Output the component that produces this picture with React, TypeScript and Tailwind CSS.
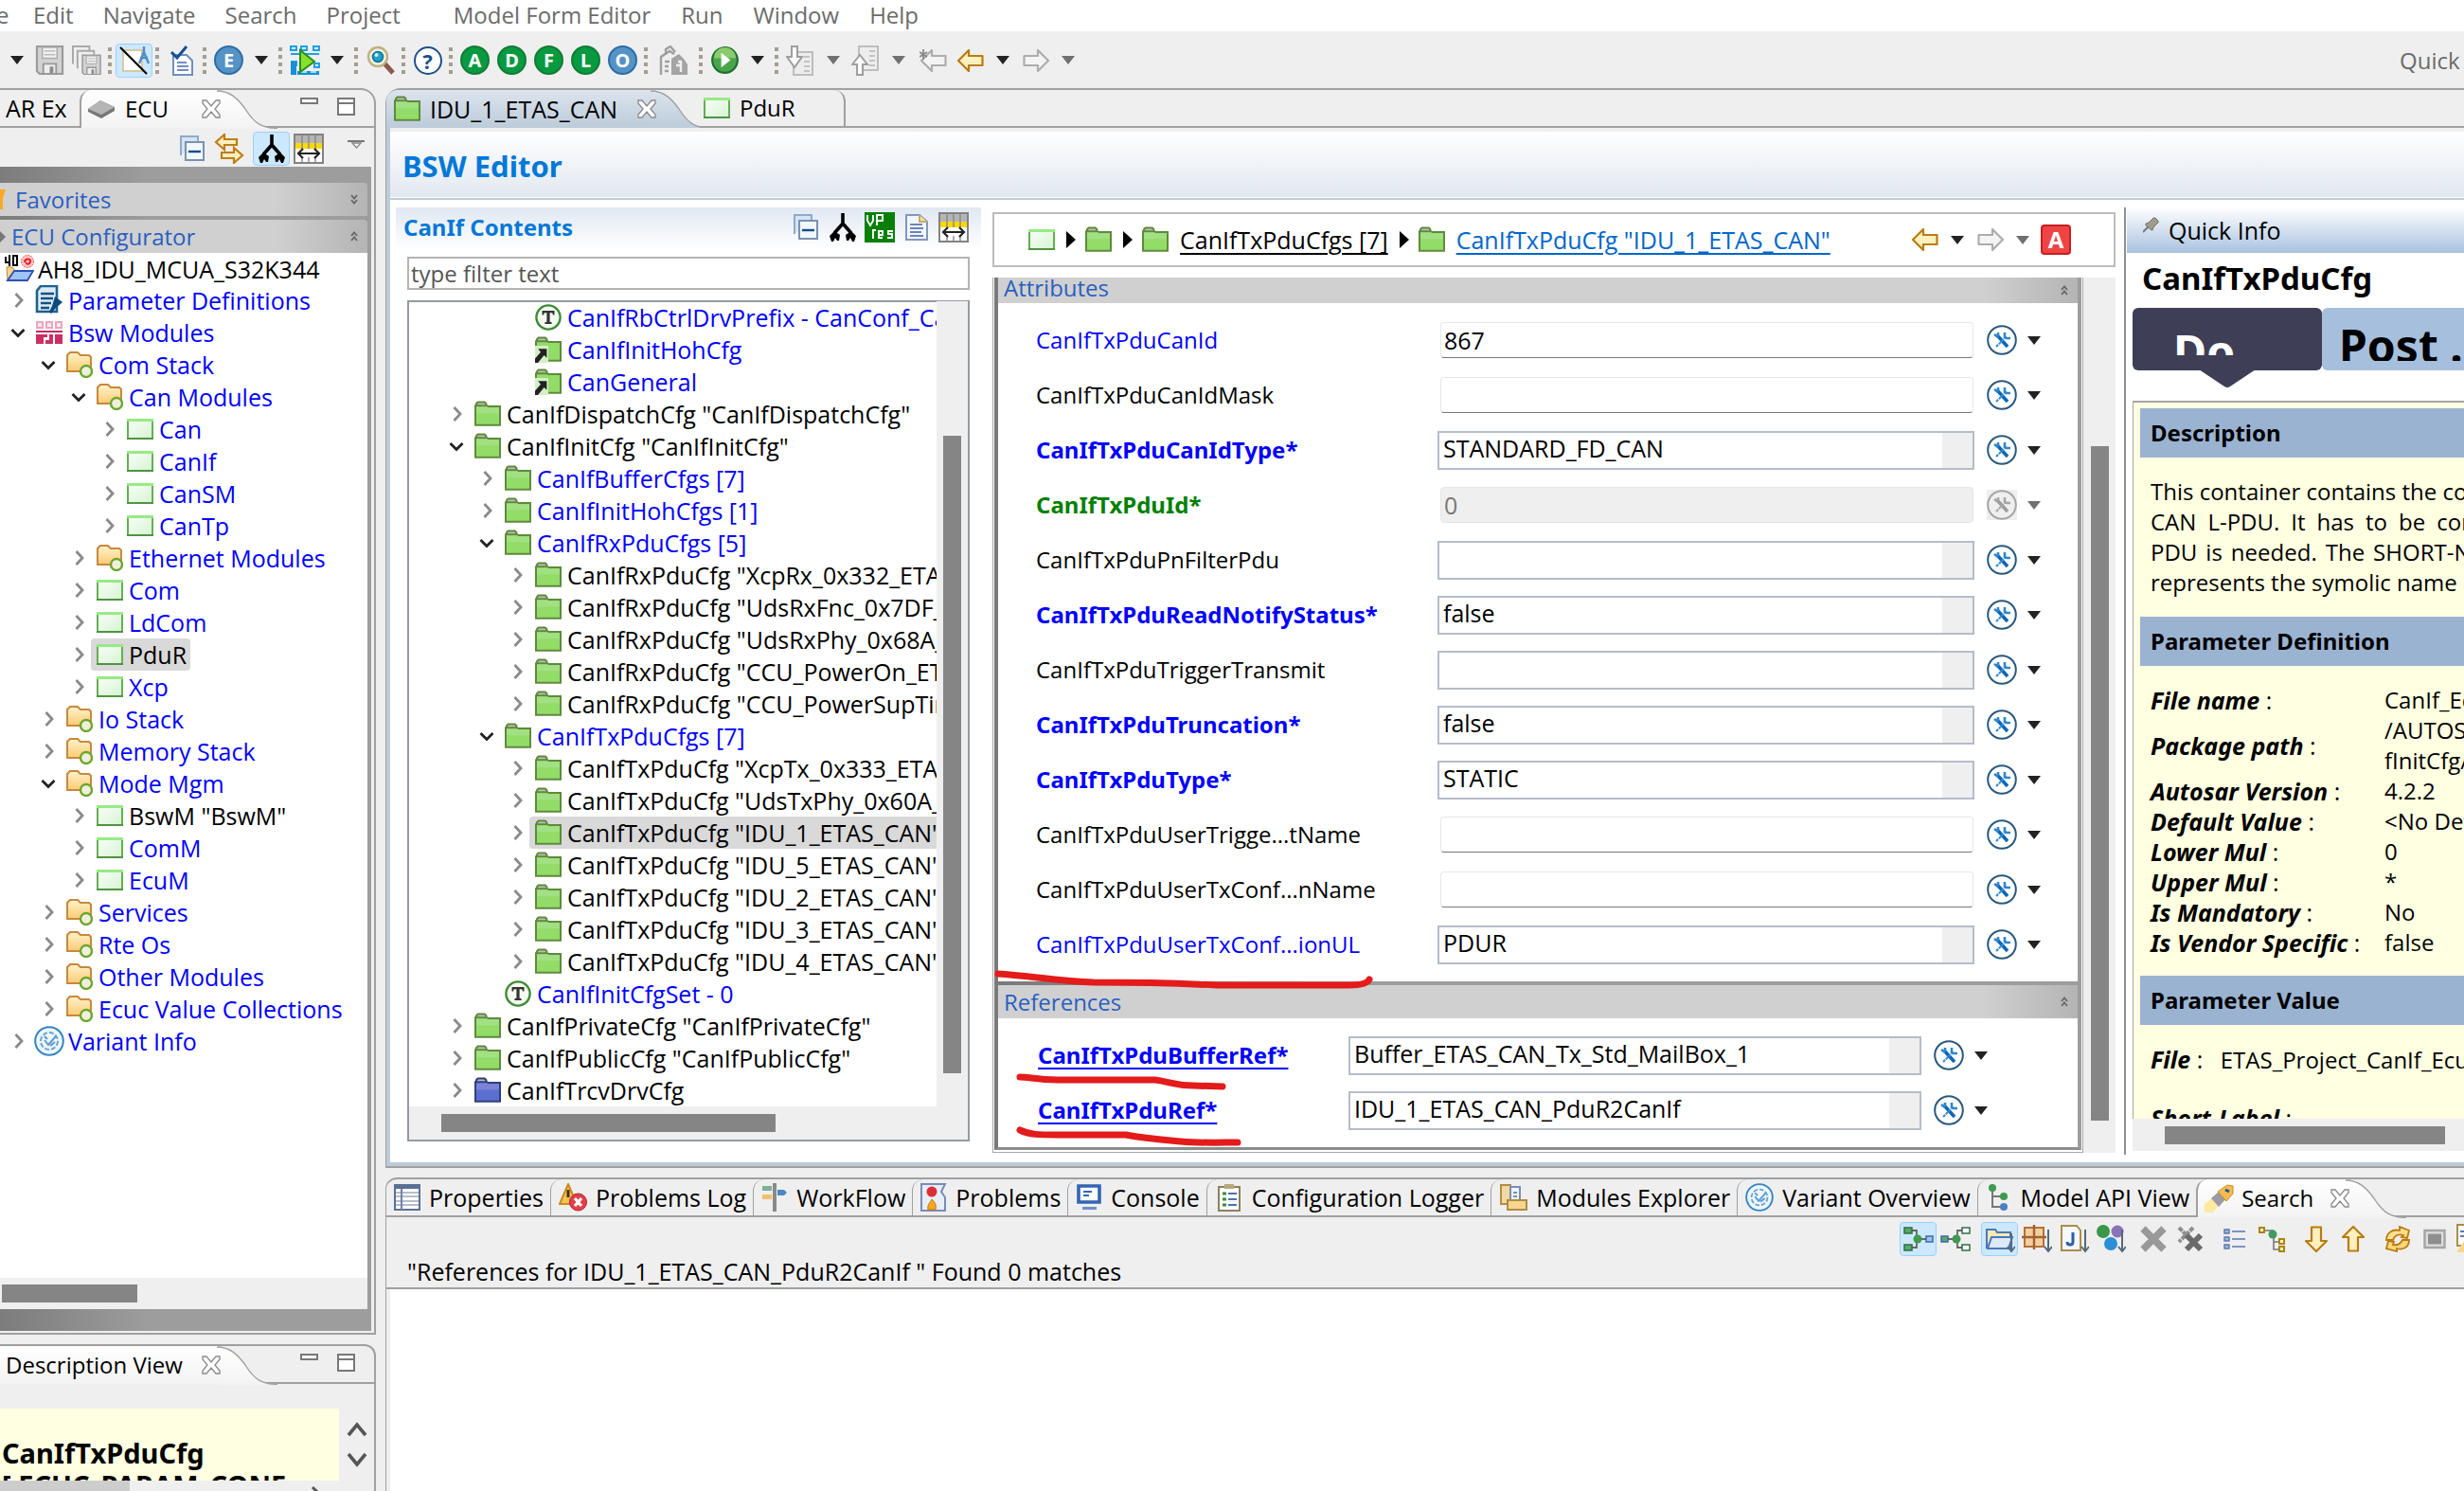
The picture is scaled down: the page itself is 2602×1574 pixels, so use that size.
import React from "react";

type P = { className?: string };

const Svg = ({ children, className = "size-8", vb = "0 0 16 16" }: { children: React.ReactNode; className?: string; vb?: string }) => (
  <svg viewBox={vb} className={`shrink-0 ${className}`} fill="none" aria-hidden="true">{children}</svg>
);

/* ---------- icons ---------- */
const Folder = ({ className = "size-7", blue = false }: P & { blue?: boolean }) => (
  <Svg className={className} vb="0 0 14 14">
    <path d="M1 2.8V1.6L1.8.8h3.6l.8.8v1.2" fill="#bdbdbd" stroke={blue ? "#2f3f7c" : "#5f8a3c"} />
    <path d="M.5 2.6h6l.5.4h6.5v9.9H.5z" fill={blue ? "#5a70d0" : "#93dc68"} stroke={blue ? "#2f3f7c" : "#5f8a3c"} />
    <path d="M1 3.2h5.8l.5.4H13v3H1z" fill={blue ? "#7c83d6" : "#a2e084"} />
  </Svg>
);
const RefFolder = () => (
  <Svg className="size-7" vb="0 0 14 14">
    <path d="M1 2.8V1.6L1.8.8h3.6l.8.8v1.2" fill="#bdbdbd" stroke="#5f8a3c" />
    <path d="M.5 2.6h6l.5.4h6.5v9.9H.5z" fill="#93dc68" stroke="#5f8a3c" />
    <path d="M0 5h7v9H0z" fill="#d3efc4" />
    <path d="M1.6 6.6h4.6v4.8L4.8 10 1.5 14H0v-2.2L3 8.4z" fill="#222" />
  </Svg>
);
const ModuleBox = () => (
  <Svg className="h-[22px] w-7" vb="0 0 28 22">
    <defs><linearGradient id="mb" x1="0" y1="0" x2="1" y2="1"><stop offset="0" stopColor="#fafffa" /><stop offset="1" stopColor="#d6f3d2" /></linearGradient></defs>
    <path d="M1 1h26v20H1z" fill="url(#mb)" stroke="#63b052" strokeWidth="2" />
    <path d="M0 0h28v3H0z" fill="#97ea84" />
    <path d="M0 20h28v2H0z" fill="#4f9442" />
  </Svg>
);
const TreeFolder = () => (
  <Svg className="h-7 w-7" vb="0 0 28 28">
    <defs><linearGradient id="tf" x1="0" y1="0" x2="0" y2="1"><stop offset="0" stopColor="#fff3cc" /><stop offset="1" stopColor="#fbcb74" /></linearGradient></defs>
    <path d="M1 21V4l3-3h8l3 3h9l2 2v15z" fill="url(#tf)" stroke="#c8883c" strokeWidth="2" />
    <circle cx="21" cy="21" r="6" fill="#eef0dc" stroke="#6ea62c" strokeWidth="2.4" />
  </Svg>
);
const TypeT = () => (
  <Svg className="size-7" vb="0 0 28 28">
    <circle cx="14" cy="14" r="12.6" fill="#f4fbf0" stroke="#3f8a35" strokeWidth="2.4" />
    <path d="M7.5 7h13v4.5H19l-.8-2.2h-2.6v9.4l2 .6V21h-7.2v-1.7l2-.6V9.3H9.800L9 11.500H7.500z" fill="#333" />
  </Svg>
);
const VariantCircle = ({ className = "size-8" }: P) => (
  <Svg className={className} vb="0 0 32 32">
    <circle cx="16" cy="16" r="14.800" stroke="#3485c4" strokeWidth="2" fill="#eef6fc" />
    <circle cx="16" cy="16" r="9" stroke="#6aa5d3" strokeWidth="2" strokeDasharray="5 2" />
    <path d="M11 15l4 5 8-9M11 11l3 3M17 21l5-4" stroke="#5a9bd0" strokeWidth="2" />
  </Svg>
);
const ParamDefs = () => (
  <Svg className="size-8" vb="0 0 32 32">
    <path d="M7 1h17v27H3V6z" fill="#dcebf5" stroke="#1f618e" strokeWidth="2.600" />
    <path d="M7 9h14M7 14h13M7 19h11M7 24h9" stroke="#15517d" strokeWidth="2.400" />
    <path d="M22 12l8 6-7 6-5 6-2-2 3-6z" fill="#0c4a80" />
  </Svg>
);
const BswIcon = () => (
  <Svg className="h-6 w-7" vb="0 0 28 24">
    <path d="M1 1h6v6H1zM11 1h6v6h-6zM21 1h6v6h-6z" stroke="#e9a6bd" strokeWidth="2" fill="#fbeaf0" />
    <path d="M0 10h28v2H0z" fill="#c8285a" />
    <path d="M0 14h12v3H8v7H0zM14 14h4v10h-8v-4h4zM20 14h8v10h-8z" fill="#cc2f63" />
  </Svg>
);
const ProjectIcon = () => (
  <Svg className="size-8" vb="0 0 32 32">
    <path d="M3 14h6l3 4-8 10z" fill="#f7d68c" stroke="#b98a3a" />
    <path d="M4 28l7-10h20l-6 10z" fill="#9dc4f5" stroke="#2f50b0" strokeWidth="1.800" />
    <path d="M2 3v6h5M6 1v12M10 2h4v10h-4z" stroke="#000" strokeWidth="2" />
    <circle cx="25" cy="8" r="6.500" fill="#fbc3c3" stroke="#ef5a5a" strokeDasharray="2 1" />
    <path d="M22 9c0-5 7-4 6-1-1 4-5 3-4 1" stroke="#e02020" strokeWidth="2" />
  </Svg>
);
const Wrench = ({ off = false }: { off?: boolean }) => (
  <Svg className={off ? "size-8 bg-[#efefef]" : "size-8"} vb="0 0 32 32">
    <circle cx="16" cy="16" r="14.800" stroke={off ? "#a5a5a5" : "#2a587c"} strokeWidth="2" />
    <path d="M11 11l11 12" stroke={off ? "#9c9c9c" : "#0d66b5"} strokeWidth="3.600" />
    <path d="M10 23L20 13" stroke={off ? "#a5a5a5" : "#3b8fd2"} strokeWidth="2.200" strokeDasharray="3 1" />
    <path d="M19 8v5l2 1h4M8 10l4 3M12 8v4" stroke={off ? "#a5a5a5" : "#2f86cc"} strokeWidth="2.600" />
  </Svg>
);
const CollapseAll = () => (
  <Svg className="h-7 w-[26px]" vb="0 0 26 28">
    <path d="M1 21V1h18v5" stroke="#8fa9c9" strokeWidth="2" fill="#d5e5f5" />
    <path d="M6 7h19v19H6z" fill="#f1f7fd" stroke="#7b90b3" strokeWidth="2" />
    <path d="M9 17h13" stroke="#0c4f8c" strokeWidth="2.400" />
  </Svg>
);
const Branch = () => (
  <Svg className="h-8 w-7" vb="0 0 28 32">
    <path d="M14 1v11l-8 9v6M14 12l8 9v6" stroke="#000" strokeWidth="3.600" />
    <path d="M0 25l5-5 6 4-1 6H8l-2-3-2 4H2zM28 25l-5-5-6 4 1 6h2l2-3 2 4h2z" fill="#000" />
  </Svg>
);
const Columns = () => (
  <Svg className="size-8" vb="0 0 32 32">
    <path d="M1 1h30v30H1z" fill="#fff" stroke="#828282" strokeWidth="2" />
    <path d="M2 2h28v8H2z" fill="#b5b5b5" />
    <path d="M2 10h28v6H2z" fill="#ffd800" />
    <path d="M9 2v14M16 2v14M23 2v14M9 25v5M16 25v5M23 25v5" stroke="#888" strokeWidth="1.400" />
    <path d="M5 21h22M10 16l-5 5 5 5M22 16l5 5-5 5" stroke="#222" strokeWidth="2.200" />
  </Svg>
);
const VpRes = () => (
  <Svg className="size-8" vb="0 0 32 32">
    <path d="M0 0h32v32H0z" fill="#088008" />
    <path d="M3 3v6l3 5 3-5V3M13 14V3h6v6h-6M9 28v-9h3M14 24h5v-4h-4v7h4M30 20h-5v3h4v4h-5" stroke="#fff" strokeWidth="1.900" />
  </Svg>
);
const Page = () => (
  <Svg className="h-7 w-6" vb="0 0 24 28">
    <path d="M1 1h14l8 7v19H1z" fill="#f2f6fc" stroke="#8197bd" strokeWidth="2" />
    <path d="M15 1v7h8" fill="#f4dfa5" stroke="#c9ac62" strokeWidth="2" />
    <path d="M5 11h13M5 15h14M5 19h12M5 23h14" stroke="#6a84b8" strokeWidth="2" />
  </Svg>
);
const SwapArrows = () => (
  <Svg className="size-8" vb="0 0 32 32">
    <path d="M11 1v5h13v6H11v5L2 9z" fill="#fdeebf" stroke="#bd7e14" strokeWidth="2.200" />
    <path d="M21 15v5H8v6h13v5l9-8z" fill="#fdeebf" stroke="#bd7e14" strokeWidth="2.200" />
  </Svg>
);
const Arrow = ({ dir = "l", off = false, star = false }: { dir?: "l" | "r" | "u" | "d"; off?: boolean; star?: boolean }) => {
  const rot = { l: "", r: "rotate-180", u: "rotate-90", d: "-rotate-90" }[dir];
  return (
    <Svg className={`h-6 w-[30px] ${rot}`} vb="0 0 30 24">
      <path d="M13 1v6h14.500v10H13v6L2 12z" fill={off ? "#f4f4f4" : "#fff0bd"} stroke={off ? "#adadad" : "#ba7b10"} strokeWidth="2.200" strokeLinejoin="round" />
      {star && <path d="M4 0v11M0 3l8 5M8 3L0 8" stroke="#8a8a8a" strokeWidth="1.800" />}
    </Svg>
  );
};
const Tri = ({ off = false }: { off?: boolean }) => (
  <Svg className="h-[9px] w-[14px]" vb="0 0 14 9"><path d="M0 0h14L7 9z" fill={off ? "#707070" : "#222"} /></Svg>
);
const TriRight = () => (
  <Svg className="-mr-[2px] h-[18px] w-[10px]" vb="0 0 10 18"><path d="M0 0l10 9-10 9z" fill="#000" /></Svg>
);
const CloseX = () => (
  <Svg className="size-5" vb="0 0 20 20">
    <path d="M1 1h4l5 6 5-6h4v3l-5 6 5 6v3h-4l-5-6-5 6H1v-3l5-6-5-6z" fill="#fff" stroke="#8a8a8a" strokeWidth="1.300" />
  </Svg>
);
const Circ = ({ ch, blue = false }: { ch: string; blue?: boolean }) => (
  <span className={`grid size-[31px] place-items-center rounded-full border-2 font-['Noto_Sans',sans-serif] text-[20px] leading-none font-bold text-white ${blue ? "border-[#2d6ca6] bg-[#5592c6]" : "border-[#0f7c35] bg-[#079a40]"}`}>{ch}</span>
);
const MinMax = () => (
  <div className="flex gap-5">
    <button aria-label="Minimize" className="h-[7px] w-[19px] border-2 border-[#777] bg-white" />
    <button aria-label="Maximize" className="flex h-[19px] w-[19px] items-start border-2 border-[#777] bg-white"><span className="h-[5px] flex-1 border-b-2 border-[#777]" /></button>
  </div>
);
const Save = ({ many = false }: { many?: boolean }) => (
  <Svg className="size-[31px]" vb="0 0 32 32">
    {many && <path d="M1 20V1h18v4M6 25V6h18v4" stroke="#a9a9a9" strokeWidth="2" />}
    <g transform={many ? "translate(10 10) scale(.7)" : ""}>
      <path d="M2 1h28v30H5l-3-3z" fill="#d2d2d2" stroke="#9b9b9b" strokeWidth="2.200" />
      <path d="M8 2h16v12H8z" fill="#f1f1f1" stroke="#aaa" strokeWidth="1.500" />
      <path d="M10 6h12M10 10h12" stroke="#bbb" strokeWidth="1.500" />
      <path d="M9 20h14v11H9z" fill="#eee" stroke="#999" strokeWidth="2" />
      <path d="M16 23h4v7h-4z" fill="#8c8c8c" />
    </g>
  </Svg>
);
const MarkOff = () => (
  <Svg vb="0 0 32 32">
    <path d="M4 5h20v22H4z" fill="#fff" stroke="#d9c9a3" strokeWidth="2" />
    <path d="M26 1v6l-5 12M26 7l5 12M22 13h8" stroke="#4e8cc9" strokeWidth="2.400" />
    <path d="M1 2l28 28" stroke="#000" strokeWidth="2.200" />
  </Svg>
);
const CheckList = () => (
  <Svg vb="0 0 32 32">
    <path d="M7 10h14l6 6v15H7z" fill="#fff" stroke="#6f8fbf" strokeWidth="2" />
    <path d="M11 18h10M11 22h12M11 26h12" stroke="#6f8fbf" strokeWidth="2" />
    <path d="M5 7l6 6L21 1" stroke="#174f94" strokeWidth="3" />
  </Svg>
);
const RunGrid = () => (
  <Svg vb="0 0 32 32">
    <path d="M1 1h6v4H1zM12 1h6v4h-6zM25 1h6v4h-6zM1 9h30M1 17h6v5M26 19h5v4h-5z" stroke="#1ba1e6" strokeWidth="2" />
    <path d="M1 17h6v14H1zM8 27h23v4H8z" fill="#1590dc" /><path d="M12 28h6M22 28h6" stroke="#9fe0ff" strokeWidth="2" />
    <path d="M11 5l15 12-15 11z" fill="#86e22c" stroke="#2c8f1e" strokeWidth="2" />
  </Svg>
);
const Magnifier = () => (
  <Svg vb="0 0 32 32">
    <path d="M20 19l9 10" stroke="#8b5a4c" strokeWidth="5" />
    <circle cx="13" cy="12" r="10" fill="#f4f1e2" stroke="#bfb083" strokeWidth="2.400" />
    <circle cx="13" cy="12" r="5.500" fill="#1fa3c9" stroke="#0b6f95" strokeWidth="1.500" />
    <circle cx="11.500" cy="10" r="2" fill="#d7f4ff" />
  </Svg>
);
const Bags = () => (
  <Svg vb="0 0 32 32">
    <path d="M2 31V12l9-6 5 3M7 10V4l5-3 5 6" stroke="#9f9f9f" strokeWidth="2.400" />
    <path d="M13 14l8-5 5 5 4 6v11H13z" fill="#a4a4a4" />
    <path d="M20 17h3v11M18 21h6" stroke="#efefef" strokeWidth="2.400" />
    <path d="M6 17h5M6 22h4M6 27h4" stroke="#9f9f9f" strokeWidth="2.400" />
  </Svg>
);
const Play = () => (
  <Svg className="size-[29px]" vb="0 0 30 30"><circle cx="15" cy="15" r="13.800" fill="#4aa54a" stroke="#1d6e30" strokeWidth="2.200" /><path d="M3 13a12 12 0 0124 0z" fill="#8acb6c" /><path d="M11 7l10 8-10 8z" fill="#fff" /></Svg>
);
const DocArrow = ({ up = false }: { up?: boolean }) => (
  <Svg vb="0 0 32 32">
    <path d={up ? "M8 1h20v25H8z" : "M8 7h20v24H8z"} fill="#ededed" stroke="#bdbdbd" strokeWidth="2" />
    <path d={up ? "M19 6h6M19 11h6M19 16h6M19 21h6" : "M19 12h6M19 17h6M19 22h6M19 27h6"} stroke="#c2c2c2" strokeWidth="2" />
    <path d={up ? "M6 31V20H1l8-10 8 10h-5v11z" : "M6 1v11H1l8 11 8-11h-5V1z"} fill="#fafafa" stroke="#9e9e9e" strokeWidth="2" />
  </Svg>
);
const DoubleChev = ({ down = false }: { down?: boolean }) => (
  <Svg className={`h-[11px] w-2 ${down ? "rotate-180" : ""}`} vb="0 0 8 11"><path d="M1 5l3-3.500L7 5M1 10l3-3.500L7 10" stroke="#666" strokeWidth="1.800" /></Svg>
);
const Chev = ({ open }: { open?: boolean }) =>
  open ? (
    <Svg className="h-4 w-4" vb="0 0 16 16"><path d="M1.500 5L8 11.500 14.500 5" stroke="#222" strokeWidth="2.800" /></Svg>
  ) : (
    <Svg className="h-4 w-4" vb="0 0 16 16"><path d="M5.500 1L12 8l-6.500 7" stroke="#8a8a8a" strokeWidth="2.800" /></Svg>
  );
const Curve = ({ from, to }: { from: string; to: string }) => {
  const id = `c${from.slice(1)}`;
  return (
    <svg viewBox="0 0 64 41" className="h-[41px] w-16 shrink-0" aria-hidden="true">
      <defs><linearGradient id={id} x1="0" y1="0" x2="0" y2="1"><stop offset="0" stopColor={from} /><stop offset="1" stopColor={to} /></linearGradient></defs>
      <path d="M0 1C14 1 22 9 30 20c10 16 18 20 34 20.500V41H0z" fill={`url(#${id})`} />
      <path d="M0 1C14 1 22 9 30 20c10 16 18 20 34 20.500" fill="none" stroke="#a0a0a0" strokeWidth="1.400" />
    </svg>
  );
};

/* ---------- trees ---------- */
type Node = { d: number; t: string; o?: 0 | 1 | 2; i: React.ReactNode; k?: boolean; sel?: boolean };
const f = <TreeFolder />, m = <ModuleBox />, g = <Folder />;
const ecu: Node[] = [
  { d: 0, t: "Parameter Definitions", i: <ParamDefs /> },
  { d: 0, t: "Bsw Modules", o: 1, i: <BswIcon /> },
  { d: 1, t: "Com Stack", o: 1, i: f },
  { d: 2, t: "Can Modules", o: 1, i: f },
  { d: 3, t: "Can", i: m }, { d: 3, t: "CanIf", i: m }, { d: 3, t: "CanSM", i: m }, { d: 3, t: "CanTp", i: m },
  { d: 2, t: "Ethernet Modules", i: f },
  { d: 2, t: "Com", i: m }, { d: 2, t: "LdCom", i: m }, { d: 2, t: "PduR", i: m, k: true, sel: true }, { d: 2, t: "Xcp", i: m },
  { d: 1, t: "Io Stack", i: f }, { d: 1, t: "Memory Stack", i: f },
  { d: 1, t: "Mode Mgm", o: 1, i: f },
  { d: 2, t: 'BswM "BswM"', i: m, k: true }, { d: 2, t: "ComM", i: m }, { d: 2, t: "EcuM", i: m },
  { d: 1, t: "Services", i: f }, { d: 1, t: "Rte Os", i: f }, { d: 1, t: "Other Modules", i: f }, { d: 1, t: "Ecuc Value Collections", i: f },
  { d: 0, t: "Variant Info", i: <VariantCircle /> },
];
const canif: Node[] = [
  { d: 2, t: "CanIfRbCtrlDrvPrefix - CanConf_CanController", o: 2, i: <TypeT /> },
  { d: 2, t: "CanIfInitHohCfg", o: 2, i: <RefFolder /> },
  { d: 2, t: "CanGeneral", o: 2, i: <RefFolder /> },
  { d: 0, t: 'CanIfDispatchCfg "CanIfDispatchCfg"', i: g, k: true },
  { d: 0, t: 'CanIfInitCfg "CanIfInitCfg"', o: 1, i: g, k: true },
  { d: 1, t: "CanIfBufferCfgs [7]", i: g }, { d: 1, t: "CanIfInitHohCfgs [1]", i: g },
  { d: 1, t: "CanIfRxPduCfgs [5]", o: 1, i: g },
  { d: 2, t: 'CanIfRxPduCfg "XcpRx_0x332_ETAS_CAN"', i: g, k: true },
  { d: 2, t: 'CanIfRxPduCfg "UdsRxFnc_0x7DF_ETAS_CAN"', i: g, k: true },
  { d: 2, t: 'CanIfRxPduCfg "UdsRxPhy_0x68A_ETAS_CAN"', i: g, k: true },
  { d: 2, t: 'CanIfRxPduCfg "CCU_PowerOn_ETAS_CAN"', i: g, k: true },
  { d: 2, t: 'CanIfRxPduCfg "CCU_PowerSupTime_ETAS"', i: g, k: true },
  { d: 1, t: "CanIfTxPduCfgs [7]", o: 1, i: g },
  { d: 2, t: 'CanIfTxPduCfg "XcpTx_0x333_ETAS_CAN"', i: g, k: true },
  { d: 2, t: 'CanIfTxPduCfg "UdsTxPhy_0x60A_ETAS_CAN"', i: g, k: true },
  { d: 2, t: 'CanIfTxPduCfg "IDU_1_ETAS_CAN"', i: g, k: true, sel: true },
  { d: 2, t: 'CanIfTxPduCfg "IDU_5_ETAS_CAN"', i: g, k: true },
  { d: 2, t: 'CanIfTxPduCfg "IDU_2_ETAS_CAN"', i: g, k: true },
  { d: 2, t: 'CanIfTxPduCfg "IDU_3_ETAS_CAN"', i: g, k: true },
  { d: 2, t: 'CanIfTxPduCfg "IDU_4_ETAS_CAN"', i: g, k: true },
  { d: 1, t: "CanIfInitCfgSet - 0", o: 2, i: <TypeT /> },
  { d: 0, t: 'CanIfPrivateCfg "CanIfPrivateCfg"', i: g, k: true },
  { d: 0, t: 'CanIfPublicCfg "CanIfPublicCfg"', i: g, k: true },
  { d: 0, t: "CanIfTrcvDrvCfg", i: <Folder blue />, k: true },
];
const pads = ["pl-0", "pl-8", "pl-16", "pl-24"];
const Rows = ({ nodes }: { nodes: Node[] }) => (
  <>
    {nodes.map((n) => (
      <li key={n.t} className={`flex h-[34px] items-center text-[25px] whitespace-nowrap ${pads[n.d]}`}>
        <button aria-label={`Toggle ${n.t}`} className="grid w-4 shrink-0 place-items-center">{n.o !== 2 && <Chev open={n.o === 1} />}</button>
        <span className={`ml-[5px] flex h-[34px] items-center rounded-sm pr-1 ${n.sel ? "bg-[#d9d9d9]" : ""} ${n.k ? "text-black" : "text-[#0000ff]"}`}>
          <span className="grid w-10 shrink-0 place-items-center">{n.i}</span>
          {n.t}
        </span>
      </li>
    ))}
  </>
);

/* ---------- form ---------- */
const blue = "text-[#0000ff]";
const bold = "font-['Noto_Sans',sans-serif] font-bold";
type Field = { l: string; v: string; c: string; kind: "text" | "combo" | "off" };
const attrs: Field[] = [
  { l: "CanIfTxPduCanId", v: "867", c: blue, kind: "text" },
  { l: "CanIfTxPduCanIdMask", v: "", c: "", kind: "text" },
  { l: "CanIfTxPduCanIdType*", v: "STANDARD_FD_CAN", c: `${blue} ${bold}`, kind: "combo" },
  { l: "CanIfTxPduId*", v: "0", c: `text-[#008000] ${bold}`, kind: "off" },
  { l: "CanIfTxPduPnFilterPdu", v: "", c: "", kind: "combo" },
  { l: "CanIfTxPduReadNotifyStatus*", v: "false", c: `${blue} ${bold}`, kind: "combo" },
  { l: "CanIfTxPduTriggerTransmit", v: "", c: "", kind: "combo" },
  { l: "CanIfTxPduTruncation*", v: "false", c: `${blue} ${bold}`, kind: "combo" },
  { l: "CanIfTxPduType*", v: "STATIC", c: `${blue} ${bold}`, kind: "combo" },
  { l: "CanIfTxPduUserTrigge...tName", v: "", c: "", kind: "text" },
  { l: "CanIfTxPduUserTxConf...nName", v: "", c: "", kind: "text" },
  { l: "CanIfTxPduUserTxConf...ionUL", v: "PDUR", c: blue, kind: "combo" },
];
const Control = ({ x }: { x: Field }) =>
  x.kind === "combo" ? (
    <div className="flex h-[41px] min-w-0 flex-1 border-2 border-[#b4bdc9] bg-white text-[25px]">
      <select id={x.l} defaultValue={x.v} className="min-w-0 flex-1 appearance-none bg-white px-1 pb-1 outline-none">
        <option>{x.v}</option>
      </select>
      <span className="w-8 bg-[#efefef]" />
    </div>
  ) : (
    <input id={x.l} defaultValue={x.v} disabled={x.kind === "off"}
      className={`mr-px ml-[3px] h-[38px] min-w-0 flex-1 rounded-sm border px-[3px] text-[25px] outline-none ${x.kind === "off" ? "border-[#e6e6e6] bg-[#efefef] text-[#777]" : "border-[#e6e6e6] border-b-[#777] bg-white"}`} />
  );
const Tools = ({ off }: { off?: boolean }) => (
  <button disabled={off} aria-label="Configure value" className="flex items-center gap-[11px] pl-[13px]"><Wrench off={off} /><Tri off={off} /></button>
);
const GroupHead = ({ children, cut }: { children: string; cut?: boolean }) => (
  <div className={`flex items-center justify-between overflow-hidden bg-[linear-gradient(to_right,#d0d0d0_0,#d0d0d0_calc(100%_-_100px),#b4b4b4_100%)] pr-[10px] pl-[6px] text-[#2a5fc0] ${cut ? "h-[27px]" : "h-[35px]"}`}>
    <h3 className={cut ? "-mt-[6px]" : ""}>{children}</h3>
    <button aria-label={`Collapse ${children}`}><DoubleChev /></button>
  </div>
);

/* ---------- toolbar ---------- */
const Ic = ({ children, on, wide }: { children: React.ReactNode; on?: boolean; wide?: boolean }) => (
  <button className={`grid h-9 shrink-0 place-items-center ${wide ? "w-[47px]" : "w-[39px]"} ${on ? "rounded-sm border border-[#99d1ff] bg-[#cce8ff]" : ""}`}>{children}</button>
);
const Dd = ({ off }: { off?: boolean }) => <button aria-label="More" className="grid h-9 w-[30px] shrink-0 place-items-center"><Tri off={off} /></button>;
const Dots = () => <span className="mx-[3px] h-7 w-[5px] shrink-0 bg-[repeating-linear-gradient(to_bottom,#a39f8f_0_4px,transparent_4px_8px)] bg-clip-content pr-px" />;
const Bar = () => <span className="h-8 w-px shrink-0 bg-[#8a8a8a]" />;

const btabs: [string, React.ReactNode][] = [
  ["Properties", <Svg className="h-7 w-7" vb="0 0 28 28"><path d="M1 1h26v26H1z" fill="#fff" stroke="#5b6f96" strokeWidth="2" /><path d="M1 1h26v4H1z" fill="#5b6f96" /><path d="M2 9h24M2 13h24M2 18h24M2 22h24" stroke="#b5bccb" strokeWidth="2" /><path d="M8 5v22" stroke="#6f82a8" strokeWidth="2" /></Svg>],
  ["Problems Log", <Svg className="h-[30px] w-[30px]" vb="0 0 30 30"><path d="M10 1l9 21H1z" fill="#f7c255" stroke="#c98a20" strokeWidth="2" /><path d="M10 7v8" stroke="#4a3208" strokeWidth="3" /><circle cx="20.500" cy="20" r="9" fill="#e2404a" stroke="#b0202a" /><path d="M17 16l7 8M24 16l-7 8" stroke="#fff" strokeWidth="3" /></Svg>],
  ["WorkFlow", <Svg className="h-[30px] w-[28px]" vb="0 0 28 30"><path d="M12 0h4v30h-4z" fill="#8a8a8a" /><path d="M1 3h10v5H1z" fill="#7bb09a" /><path d="M17 7h7l3 3-3 3h-7z" fill="#4c86c6" /><path d="M1 12h10v5H1z" fill="#f0c070" /></Svg>],
  ["Problems", <Svg className="h-[30px] w-[28px]" vb="0 0 28 30"><path d="M1 1h25l-4 8 4 6v14H1z" fill="#e6eef9" stroke="#7a8cb5" strokeWidth="2" /><circle cx="12" cy="9" r="5.500" fill="#dc2f35" /><path d="M12 17c3 3 5 5 4 11H8c-1-5 2-7 4-11z" fill="#f5a623" stroke="#c7780a" /></Svg>],
  ["Console", <Svg className="h-7 w-[28px]" vb="0 0 28 28"><path d="M3 2h22v17H3z" fill="#fff" stroke="#3464b4" strokeWidth="3.600" /><path d="M8 8h9M8 12h6" stroke="#3464b4" strokeWidth="2" /><path d="M7 24h15v3H7z" fill="#6d8fc4" /></Svg>],
  ["Configuration Logger", <Svg className="h-[30px] w-[30px]" vb="-3 0 30 30"><path d="M1 4h22v25H1z" fill="#fff" stroke="#8c8060" strokeWidth="2" /><path d="M7 1h10v5H7z" fill="#b7a878" /><path d="M5 11h4M5 17h4M5 23h4" stroke="#3b8a3b" strokeWidth="3" /><path d="M11 11h9M11 17h9M11 23h9" stroke="#4d6fb3" strokeWidth="2" /></Svg>],
  ["Modules Explorer", <Svg className="h-[30px] w-[30px]" vb="0 0 30 30"><path d="M2 2h10v20H2z" fill="#f1d9a2" stroke="#b18c46" strokeWidth="2" /><path d="M12 4h10v20H12z" fill="#eef3fb" stroke="#7b8db5" strokeWidth="2" /><path d="M15 10h4M15 14h4" stroke="#7b8db5" strokeWidth="2" /><path d="M9 18h20v10H9z" fill="#f6d68f" stroke="#b18c46" strokeWidth="2" /></Svg>],
  ["Variant Overview", <VariantCircle className="size-[30px]" />],
  ["Model API View", <Svg className="h-7 w-[28px]" vb="-2 0 28 28"><path d="M5 4v20h10M5 13h10" stroke="#777" strokeWidth="2" /><circle cx="5" cy="4" r="4" fill="#3f9a4e" /><circle cx="17" cy="13" r="4" fill="#3f9a4e" /><circle cx="17" cy="24" r="4" fill="#4b7fc4" /></Svg>],
];
const Nodes = ({ flip }: { flip?: boolean }) => (
  <Svg className={`h-7 w-8 ${flip ? "rotate-180" : ""}`} vb="0 0 32 28"><path d="M6 5h8v18H6M14 14h14" stroke="#666" strokeWidth="1.800" /><path d="M1 2h8v6H1zM1 20h8v6H1z" fill={flip ? "#fff" : "#58a868"} stroke="#2f6f48" strokeWidth="1.500" /><circle cx="15" cy="14" r="4.500" fill="#3f9a4e" /><path d="M24 11h7v6h-7z" fill={flip ? "#58a868" : "#9fc3ee"} stroke="#3b6aa8" strokeWidth="1.500" /></Svg>
);
const GrayX = ({ two }: { two?: boolean }) => (
  <Svg className="size-7" vb="0 0 28 28">
    {two && <path d="M2 2l15 15M17 2L2 17" stroke="#8f8f8f" strokeWidth="4" strokeDasharray="5 1" />}
    <path d={two ? "M10 10l15 15M25 10L10 25" : "M3 3l22 22M25 3L3 25"} stroke={two ? "#6b6b6b" : "#999"} strokeWidth={two ? 6 : 7.5} />
  </Svg>
);

const InfoHead = ({ children }: { children: string }) => (
  <h4 className={`${bold} ml-[7px] flex h-[52px] items-center bg-[#9ab3d1] pl-[11px] text-[24px]`}>{children}</h4>
);
const infoRows: [string, React.ReactNode][] = [
  ["File name", "CanIf_EcucParamDef.arxml"], ["Package path", <>/AUTOSAR_CanIf/CanI<br />fInitCfg/CanIfTxPduCfg</>], ["Autosar Version", "4.2.2"], ["Default Value", "<No Default Value>"],
  ["Lower Mul", "0"], ["Upper Mul", "*"], ["Is Mandatory", "No"], ["Is Vendor Specific", "false"],
];

export default function App() {
  return (
    <div className="flex h-screen flex-col overflow-hidden bg-[#efefef] font-['Open_Sans',sans-serif] text-[24px] leading-8 text-black">
      {/* menu */}
      <nav className="flex h-[33px] shrink-0 items-center bg-white pb-[2px] text-[#6b6b6b] whitespace-nowrap">
        <span className="w-[35px] overflow-hidden"><span className="-ml-1">e</span></span>
        <div className="flex gap-[31px]">
          <button>Edit</button><button>Navigate</button><button>Search</button><button>Project</button>
        </div>
        <div className="ml-[56px] flex gap-[32px]">
          <button>Model Form Editor</button><button>Run</button><button>Window</button><button>Help</button>
        </div>
      </nav>
      {/* toolbar */}
      <div className="flex h-[60px] shrink-0 items-center pt-px pl-[3px]">
        <Dd /><Ic><Save /></Ic><Ic><Save many /></Ic><Dots /><Ic on><MarkOff /></Ic><Dots /><Ic><CheckList /></Ic><Dots />
        <Ic><Circ ch="E" blue /></Ic><Dd /><Dots /><Ic><RunGrid /></Ic><Dd /><Dots /><Ic><Magnifier /></Ic><Dots />
        <Ic><span className={`${bold} grid size-[30px] place-items-center rounded-full border-2 border-[#1f4f86] bg-white text-[22px] leading-none text-[#1f4f86]`}>?</span></Ic><Dots />
        <Ic><Circ ch="A" /></Ic><Ic><Circ ch="D" /></Ic><Ic><Circ ch="F" /></Ic><Ic><Circ ch="L" /></Ic><Ic><Circ ch="O" blue /></Ic><Dots />
        <Ic wide><Bags /></Ic><Dots /><Ic><Play /></Ic><Dd /><Dots /><Ic><DocArrow /></Ic><Dd off /><Ic><DocArrow up /></Ic><Dd off />
        <div className="ml-[2px] flex"><Ic><Arrow off star /></Ic><Ic><Arrow /></Ic><Dd /><Ic><Arrow off dir="r" /></Ic><Dd off /></div>
        <span className="ml-auto w-[68px] overflow-hidden whitespace-nowrap text-[#6b6b6b]">Quick Access</span>
      </div>

      <div className="flex min-h-0 flex-1 gap-[10px]">
        {/* left column */}
        <aside className="flex w-[397px] shrink-0 flex-col gap-[10px]">
          <section className="flex min-h-0 flex-1 flex-col rounded-tr-2xl border-t-2 border-r-2 border-b-2 border-[#a0a0a0]">
            <div className="flex h-[40px] shrink-0 items-stretch border-b-2 border-[#a0a0a0]">
              <span className="flex w-[84px] items-center overflow-hidden pl-[6px] text-[25px] whitespace-nowrap">AR Ex</span>
              <div className="-mb-[2px] flex w-[145px] items-center rounded-tl-xl border-l-2 border-[#a0a0a0] bg-linear-to-b from-white to-[#f3f3f3] pl-[6px]">
                <Svg className="h-[22px] w-[30px]" vb="0 0 30 22"><path d="M1 11L14 2l15 7v4L15 21 1 14z" fill="#777" /><path d="M1 11L14 2l15 7-14 8z" fill="#b5b5b5" /></Svg>
                <span className="ml-[10px]">ECU</span><button aria-label="Close ECU" className="z-10 -mr-1 ml-auto"><CloseX /></button>
              </div>
              <Curve from="#ffffff" to="#f3f3f3" />
              <div className="mt-2 mr-5 ml-auto"><MinMax /></div>
            </div>
            <div className="flex h-[41px] shrink-0 items-center justify-end pt-[2px]">
              <Ic><CollapseAll /></Ic><Ic><SwapArrows /></Ic><span className="mx-[3px]"><Bar /></span><Ic on><Branch /></Ic><Ic><Columns /></Ic>
              <button aria-label="View menu" className="mr-[10px] mb-2 ml-[22px]"><Svg className="h-[10px] w-[18px]" vb="0 0 18 10"><path d="M0 1h18" stroke="#777" strokeWidth="2" /><path d="M5 3h9L9.500 8z" fill="#fff" stroke="#888" strokeWidth="1.400" /></Svg></button>
            </div>
            <div className="mr-[3px] flex min-h-0 flex-1 flex-col gap-1 bg-linear-to-r from-[#7c7c7c] to-[#9d9d9d] to-40% pt-[17px] pr-1 pb-[23px]">
              <div className="flex h-[35px] shrink-0 items-center justify-between rounded-tr bg-[linear-gradient(to_right,#d0d0d0_75%,#b4b4b4)] pr-[10px] text-[#2a5fc0]">
                <span className="flex items-center gap-[10px]"><Svg className="h-6 w-[6px]" vb="0 0 6 24"><path d="M0 1h6L3 10v12H0z" fill="#fba922" /></Svg>Favorites</span><DoubleChev down />
              </div>
              <div className="flex min-h-0 flex-1 flex-col">
                <div className="flex h-[35px] shrink-0 items-center justify-between rounded-tr bg-[linear-gradient(to_right,#d0d0d0_75%,#b4b4b4)] pr-[10px] text-[#2a5fc0]">
                  <span className="flex items-center gap-[6px]"><Svg className="h-3 w-[6px]" vb="0 0 6 12"><path d="M0 0l6 6-6 6z" fill="#777" /></Svg>ECU Configurator</span><DoubleChev />
                </div>
                <ul className="min-h-0 flex-1 overflow-hidden bg-white">
                  <li className="flex h-[33px] items-center gap-1 pl-1 text-[25px]"><ProjectIcon />AH8_IDU_MCUA_S32K344</li>
                  <li><ul className="pl-[11px]"><Rows nodes={ecu} /></ul></li>
                </ul>
                <div className="flex h-[33px] shrink-0 items-center bg-[#efefef] pl-[2px]"><span className="h-[19px] w-[143px] bg-[#858585]" /></div>
              </div>
            </div>
            <div className="h-[2px] shrink-0" />
          </section>
          <section className="flex h-[155px] shrink-0 flex-col rounded-tr-xl border-t-2 border-r-2 border-[#a0a0a0]">
            <div className="flex h-[40px] shrink-0 border-b-2 border-[#a0a0a0]">
              <div className="-mb-[2px] flex w-[229px] items-center justify-between bg-linear-to-b from-white to-[#f3f3f3] pl-[6px] whitespace-nowrap">Description View<button aria-label="Close Description View" className="z-10 -mr-1"><CloseX /></button></div>
              <Curve from="#fffffe" to="#f3f3f3" />
              <div className="mt-2 mr-5 ml-auto"><MinMax /></div>
            </div>
            <div className="mt-[26px] flex min-h-0 flex-1">
              <div className={`flex-1 overflow-hidden bg-[#ffffe1] pt-[30px] pl-[2px] text-[29px] leading-[34px] whitespace-nowrap ${bold}`}>CanIfTxPduCfg<br />[ ECUC_PARAM_CONF</div>
              <div className="flex w-[37px] flex-col items-center gap-3 pt-3">
                <Svg className="h-5 w-[22px]" vb="0 0 22 20"><path d="M2 16L11 5l9 11" stroke="#555" strokeWidth="3.600" /></Svg>
                <Svg className="h-5 w-[22px]" vb="0 0 22 20"><path d="M2 4l9 11 9-11" stroke="#555" strokeWidth="3.600" /></Svg>
              </div>
            </div>
            <div className="flex h-[11px] shrink-0 bg-[#efefef]"><span className="w-[137px] bg-[#cdcdcd]" /><Svg className="mt-1 ml-[190px] size-4"><path d="M3 3l8 8" stroke="#555" strokeWidth="3" /></Svg></div>
          </section>
        </aside>

        <main className="flex min-w-0 flex-1 flex-col gap-[10px]">
          {/* editor */}
          <section className="flex flex-col rounded-tl-2xl border-t-2 border-b-2 border-l border-[#a0a0a0]">
            <div className="flex h-[40px] items-stretch border-b-2 border-[#a0a0a0]">
              <div className="-mb-[2px] flex w-[279px] items-center rounded-tl-xl bg-linear-to-b from-[#dce4ed] to-[#bccbda] pl-2 text-[25px] whitespace-nowrap">
                <Folder /><span className="ml-[10px]">IDU_1_ETAS_CAN</span><button aria-label="Close editor" className="z-10 -mr-[6px] ml-auto"><CloseX /></button>
              </div>
              <Curve from="#dce4ed" to="#bccbda" />
              <div className="-ml-2 flex w-[150px] items-center rounded-tr-xl border-r-2 border-[#a0a0a0]"><ModuleBox /><span className="ml-[10px]">PduR</span></div>
            </div>
            <div className="flex flex-col border-b-4 border-l-4 border-[#bccbda] bg-white">
              <div className="h-1 bg-[#efefef]" />
              <h1 className={`${bold} flex h-[70px] items-center border-b border-white bg-linear-to-b from-white to-[#e2e8f1] pt-[2px] pl-[13px] text-[31px] text-[#0078d7]`}>BSW Editor</h1>
              <div className="h-[3px] border-t-2 border-[#bccbda]" />
              <div className="flex min-h-0 pt-[7px]">
                {/* contents pane */}
                <section className="flex w-[624px] shrink-0 flex-col pr-[12px] pb-[22px] pl-[6px]">
                  <div className="-mr-3 flex h-11 items-center bg-linear-to-b from-[#e0e8f2] to-white pr-[10px] pb-[2px] pl-2">
                    <h2 className={`${bold} flex-1 text-[#0078d7]`}>CanIf Contents</h2>
                    <div className="flex items-center"><Ic><CollapseAll /></Ic><Ic><Branch /></Ic><Ic><VpRes /></Ic><Ic><Page /></Ic><Ic><Columns /></Ic></div>
                  </div>
                  <input aria-label="Filter" placeholder="type filter text" className="mt-2 ml-3 h-[35px] border-2 border-[#b4b4b4] px-[2px] outline-none placeholder:text-[#555]" />
                  <div className="mt-[11px] ml-3 flex flex-col border-2 border-[#969aa2]">
                    <div className="-mt-px flex">
                      <ul className="min-w-0 flex-1 overflow-hidden pl-[42px]"><Rows nodes={canif} /></ul>
                      <div className="w-[33px] shrink-0 bg-[#efefef] px-[7px] pt-[142px] pb-[35px]"><div className="h-full bg-[#858585]" /></div>
                    </div>
                    <div className="flex h-[35px] items-center bg-[#efefef] pl-[34px]"><span className="h-[19px] w-[353px] bg-[#858585]" /></div>
                  </div>
                </section>
                {/* details */}
                <section className="ml-3 flex min-w-0 flex-1 flex-col">
                  <div className="mt-[5px] flex h-[58px] items-center border-2 border-[#bcbcbc] pl-9 whitespace-nowrap">
                    <span className="flex items-center gap-3 text-[25px]"><ModuleBox /><TriRight /><Folder /><TriRight /><Folder /><a href="#cfgs" className="underline underline-offset-4">CanIfTxPduCfgs [7]</a><TriRight /><Folder /><a href="#cfg" className="text-[#0066cc] underline underline-offset-4">CanIfTxPduCfg "IDU_1_ETAS_CAN"</a></span>
                    <span className="mr-[45px] ml-auto flex items-center"><Ic><Arrow /></Ic><Dd /><Ic><Arrow off dir="r" /></Ic><Dd off />
                      <button className={`${bold} ml-1 grid size-8 place-items-center rounded-sm border-2 border-[#c81e1e] bg-[#ef4444] text-[24px] leading-none text-white`}>A</button></span>
                  </div>
                  <div className="relative mt-[11px] flex">
                    <div className="min-w-0 flex-1 border-r border-b border-l border-[#a8a8a8] pr-px pb-[2px] pl-px">
                      <div className="border-r-4 border-b-[3px] border-l-4 border-r-[#9d9d9d] border-b-[#8c8c8c] border-l-[#7a7a7a]">
                        <GroupHead cut>Attributes</GroupHead>
                        <div className="py-[10px] pl-10">
                          {attrs.map((x) => (
                            <div key={x.l} className="flex h-[58px] items-center">
                              <label htmlFor={x.l} className={`w-[424px] shrink-0 whitespace-nowrap ${x.c}`}>{x.l}</label>
                              <Control x={x} />
                              <div className="w-[109px] shrink-0"><Tools off={x.kind === "off"} /></div>
                            </div>
                          ))}
                        </div>
                        <div className="h-1 bg-linear-to-r from-[#7a7a7a] to-[#9d9d9d] to-30%" />
                        <GroupHead>References</GroupHead>
                        <div className="py-[10px] pl-[42px]">
                          {[["CanIfTxPduBufferRef*", "Buffer_ETAS_CAN_Tx_Std_MailBox_1"], ["CanIfTxPduRef*", "IDU_1_ETAS_CAN_PduR2CanIf"]].map(([l, v]) => (
                            <div key={l} className="flex h-[58px] items-center">
                              <label htmlFor={l} className="w-[328px] shrink-0"><a href="#ref" className={`${bold} text-[#0000ff] underline underline-offset-4`}>{l}</a></label>
                              <Control x={{ l, v, c: "", kind: "combo" }} />
                              <div className="w-[165px] shrink-0"><Tools /></div>
                            </div>
                          ))}
                        </div>
                      </div>
                    </div>
                    <div className="w-[34px] shrink-0 bg-[#efefef] pt-[178px] pr-[7px] pb-[34px] pl-2"><div className="h-full bg-[#858585]" /></div>
                    {/* red pen marks */}
                    <svg viewBox="1048 1017 270 200" className="pointer-events-none absolute bottom-0 left-0 h-[200px] w-[270px] overflow-visible" fill="none" stroke="#e41b1b" strokeWidth="7" strokeLinecap="round" strokeLinejoin="round" aria-hidden="true">
                      <path d="M1054 1028C1086 1030 1120 1036 1155 1037C1200 1037 1245 1038 1285 1040H1425C1436 1040 1444 1038 1446 1034" />
                      <path d="M1077 1137C1087 1137 1095 1140 1117 1140H1220C1236 1142 1240 1146 1260 1146L1291 1147" />
                      <path d="M1077 1193C1087 1198 1097 1198 1117 1198H1189C1210 1202 1225 1203 1247 1205C1270 1207 1290 1206 1307 1206" />
                    </svg>
                  </div>
                </section>
                {/* quick info */}
                <section className="mb-2 ml-[9px] flex w-[359px] shrink-0 flex-col overflow-hidden border-l-2 border-[#8f8f8f] pl-px">
                  <div className="flex h-12 shrink-0 items-center bg-linear-to-b from-white to-[#a9c2df] pl-[17px]">
                    <Svg className="-mt-3 size-[17px]" vb="0 0 17 17"><path d="M0 16l6-6" stroke="#777" strokeWidth="2" /><path d="M3 7l3-1 5-5h2l3 3v2l-5 5-1 3H9L3 9z" fill="#a09c8c" stroke="#75726a" /></Svg>
                    <span className="ml-[10px] text-[25px]">Quick Info</span>
                  </div>
                  <h2 className={`${bold} h-[58px] shrink-0 pl-4 text-[33px] leading-[54px]`}>CanIfTxPduCfg</h2>
                  <div className={`${bold} flex h-[66px] shrink-0 pl-[6px] text-[48px]`}>
                    <button className="relative flex w-[200px] shrink-0 items-start rounded-md bg-[#3e3e56] text-white">
                      <span className="mt-5 ml-[43px] h-[30px] overflow-hidden leading-[51px]">Do</span>
                      <Svg className="absolute top-[65px] left-[70px] h-5 w-[60px]" vb="0 0 60 20"><path d="M0 0h60L33 18q-3 2-6 0z" fill="#3e3e56" /></Svg>
                    </button>
                    <button className="flex w-[200px] shrink-0 items-start rounded-md bg-[#a5bfdc] whitespace-nowrap"><span className="ml-[18px] h-[56px] overflow-hidden leading-[80px]">Post ...</span></button>
                  </div>
                  <div className="mt-8 ml-[6px] flex-[1_1_0px] overflow-hidden border-t-2 border-l border-[#a5a5a5] bg-[#ffffe1] pt-[6px] text-[25px] whitespace-nowrap">
                    <InfoHead>Description</InfoHead>
                    <p className="h-[168px] pt-[20px] pl-[18px] text-[24px]">
                      This container contains the configuration<br /><span className="flex gap-3"><span>CAN</span><span>L-PDU.</span><span>It</span><span>has</span><span>to</span><span>be</span><span>configured</span></span>
                      <span className="flex gap-[9px]"><span>PDU</span><span>is</span><span>needed.</span><span>The</span><span>SHORT-NAME</span></span>represents the symolic name of
                    </p>
                    <InfoHead>Parameter Definition</InfoHead>
                    <table className="mt-[20px] mb-[19px] ml-[18px]"><tbody>
                      {infoRows.map(([k, v]) => (
                        <tr key={k}><td className="p-0"><div className="w-[247px]"><span className={`${bold} italic`}>{k}</span> :</div></td><td className="p-0 text-[24px]">{v}</td></tr>
                      ))}
                    </tbody></table>
                    <InfoHead>Parameter Value</InfoHead>
                    <p className="mt-[20px] pl-[18px]"><span className={`${bold} italic`}>File</span> : <span className="ml-3 text-[24px]">ETAS_Project_CanIf_EcucValues</span></p>
                    <p className="mt-[29px] pl-[18px]"><span className={`${bold} italic`}>Short-Label</span> :</p>
                  </div>
                  <div className="mb-1 ml-[6px] flex h-[34px] shrink-0 items-center bg-[#efefef] pl-[34px]"><span className="h-[19px] w-[296px] bg-[#858585]" /></div>
                </section>
              </div>
            </div>
          </section>

          {/* bottom views */}
          <section className="flex min-h-0 flex-1 flex-col rounded-tl-xl border-t-2 border-l border-[#a0a0a0]">
            <div className="flex h-[40px] shrink-0 items-stretch border-b-2 border-[#a0a0a0] text-[25px] whitespace-nowrap">
              {btabs.map(([t, i]) => (
                <button key={t} className="flex items-center gap-[9px] rounded-tl-xl pr-[7px] pl-[8px] not-first:border-l not-first:border-[#a0a0a0]">{i}{t}</button>
              ))}
              <div className="-mb-[2px] flex items-center rounded-tl-xl border-l-2 border-[#a0a0a0] bg-linear-to-b from-white to-[#f3f3f3] pl-[6px]">
                <Svg className="size-8" vb="0 0 32 32"><path d="M1 22l8-6 8 7-7 8H1z" fill="#fde9a0" /><path d="M8 16l8-7 8 7-8 9z" fill="#9d9aa6" /><path d="M15 9l10-7 6 1v8l-7 8z" fill="#f4bb52" stroke="#c98a20" /><path d="M23 7l4 2" stroke="#24558e" strokeWidth="3" /></Svg>
                <span className="ml-[8px] text-[24px]">Search</span><button aria-label="Close Search" className="z-10 -mr-1 ml-[18px]"><CloseX /></button>
              </div>
              <Curve from="#fffefe" to="#f3f3f3" />
            </div>
            <div className="flex h-[46px] shrink-0 items-center justify-end overflow-hidden">
              <Ic on><Nodes /></Ic><Ic><Nodes flip /></Ic><span className="mx-1"><Bar /></span>
              <Ic on><Svg vb="0 0 32 32"><path d="M2 6h9l2 3h14v16H2z" fill="#fde9b6" stroke="#4b78b5" strokeWidth="2" /><path d="M7 14h22l-4 12H3z" fill="#dbe9fa" stroke="#4b78b5" strokeWidth="2" /><path d="M28 10v18M24 24l4 5 4-5" stroke="#55687c" strokeWidth="2" /></Svg></Ic>
              <Ic><Svg vb="0 0 32 32"><path d="M3 4h20v20H3z" fill="#f3cf9e" stroke="#b4713a" strokeWidth="2" /><path d="M13 1v26M0 14h26" stroke="#a3602c" strokeWidth="2.400" /><path d="M28 6v22M24 24l4 5 4-5" stroke="#55687c" strokeWidth="2" /></Svg></Ic>
              <Ic><Svg vb="0 0 32 32"><path d="M3 2h16l4 5v21H3z" fill="#f5f8fd" stroke="#a88d4a" strokeWidth="2" /><path d="M15 9v10c0 4-6 4-6 0" stroke="#2b5fae" strokeWidth="3" /><path d="M28 6v22M24 24l4 5 4-5" stroke="#55687c" strokeWidth="2" /></Svg></Ic>
              <Ic><Svg vb="0 0 32 32"><circle cx="8" cy="8" r="7" fill="#3c9648" /><circle cx="23" cy="8" r="6.500" fill="#8a72b8" /><circle cx="16" cy="21" r="7" fill="#2b8fd8" /><path d="M28 6v22M24 24l4 5 4-5" stroke="#55687c" strokeWidth="2" /></Svg></Ic>
              <span className="mx-[3px]"><Bar /></span><Ic><GrayX /></Ic><Ic><GrayX two /></Ic><span className="mx-1"><Bar /></span>
              <Ic><Svg className="size-6" vb="0 0 24 24"><path d="M1 2h5v4H1zM1 10h5v4H1zM1 18h5v4H1z" fill="#9db7e0" stroke="#5b78b0" strokeWidth="1.400" /><path d="M9 4h14M9 12h14M9 20h14" stroke="#7c94c4" strokeWidth="2" /></Svg></Ic>
              <Ic><Svg className="size-7" vb="0 0 28 28"><path d="M4 5h12M16 8v17h8M16 17h8" stroke="#777" strokeWidth="1.600" /><path d="M1 2h5v5H1zM22 14h5v5h-5zM22 22h5v5h-5z" fill="#fff3c0" stroke="#a88412" strokeWidth="2" /><circle cx="15" cy="9" r="4.500" fill="#3f9a5e" /></Svg></Ic>
              <span className="mx-1"><Bar /></span><Ic><Arrow dir="d" /></Ic><Ic><Arrow dir="u" /></Ic><span className="mx-1"><Bar /></span>
              <Ic><Svg className="size-7" vb="0 0 28 28"><path d="M2 15C2 8 8 3 16 5V1l10 4-2 8-6-1 2-2c-6-2-9 0-11 5z" fill="#fbe08e" stroke="#ba7b10" strokeWidth="1.800" /><path d="M26 15c0 7-5 11-13 9v3L2 24l2-8 6 1-1 3c5 1 8-1 10-5z" fill="#fbd77a" stroke="#ba7b10" strokeWidth="1.800" /></Svg></Ic>
              <Ic><Svg className="size-6" vb="0 0 24 24"><path d="M1.500 3h21v18h-21z" fill="#ddd" stroke="#a5a5a5" strokeWidth="2.400" /><path d="M5 6.500h14v11H5z" fill="#8e8e8e" /></Svg></Ic>
              <Svg className="ml-1 h-8 w-2" vb="0 0 8 32"><path d="M1 1h9v22H1z" fill="#fff" stroke="#a88d4a" strokeWidth="2" /><path d="M4 8h6M4 13h6" stroke="#5b78b0" strokeWidth="2" /><path d="M0 30l8-12v12z" fill="#f6d68f" /></Svg>
            </div>
            <p className="h-[30px] shrink-0 border-b-2 border-[#a0a0a0] pl-[22px] text-[25px] leading-[22px] whitespace-pre">"References for IDU_1_ETAS_CAN_PduR2CanIf " Found 0 matches</p>
            <div className="ml-1 flex-1 bg-white" />
          </section>
        </main>
      </div>
    </div>
  );
}
